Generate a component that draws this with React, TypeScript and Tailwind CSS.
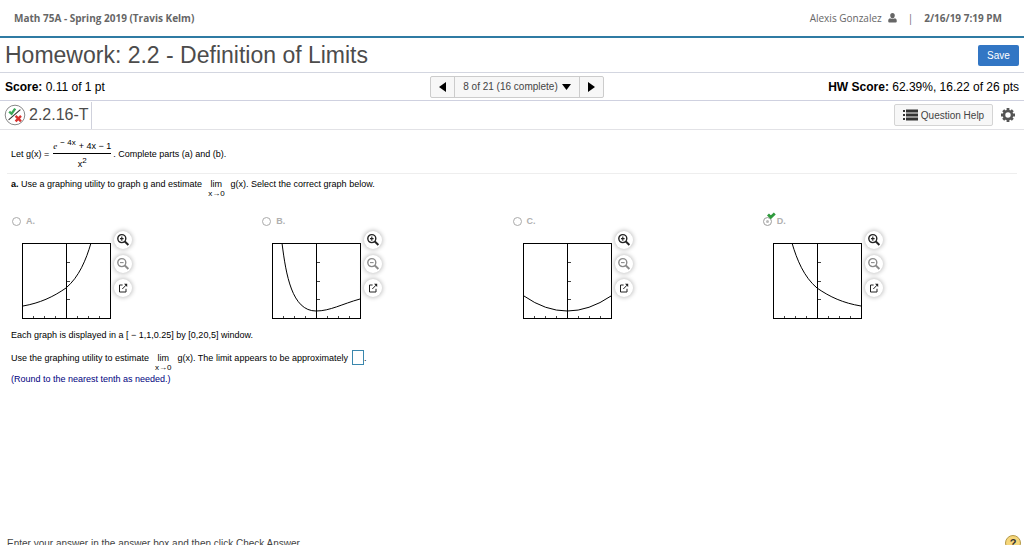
import React, { useState } from "react";

interface Choice {
  id: string;
  curve: string;
}

const choices: Choice[] = [
  { id: "A", curve: "M1 63 C18 60 31 54 44 45 C57 34 64 17 69 0" },
  { id: "B", curve: "M10 0 C14 32 20 68 44 68 C58 68 70 61 88 56" },
  { id: "C", curve: "M1 53 Q44 83 88 53" },
  { id: "D", curve: "M19 0 C24 17 31 34 44 45 C57 54 70 60 88 63" },
];

const correctChoice = "D";

const Graph = ({ curve }: { curve: string }) => (
  <svg width="89" height="76" viewBox="0 0 89 76" fill="none" stroke="#000">
    <path d={curve} strokeWidth="1" />
    <g shapeRendering="crispEdges">
      <rect x="0.5" y="0.5" width="88" height="75" />
      <path d="M44.5 0V76" />
      <path d="M45 19.5h3M45 38.5h3M45 56.5h3" stroke="#444" />
      <path d="M11.5 73v2M22.5 73v2M33.5 73v2M55.5 73v2M66.5 73v2M77.5 73v2" stroke="#444" />
    </g>
  </svg>
);

const Magnifier = ({ plus }: { plus?: boolean }) => (
  <svg width="14" height="14" viewBox="0 0 14 14" fill="none" stroke="currentColor">
    <circle cx="5.8" cy="5.6" r="4" strokeWidth="1.4" />
    <path d="M8.8 8.6L12.4 12" strokeWidth="2" />
    <path d={plus ? "M4 5.6h3.6M5.8 3.4v4.4" : "M4 5.6h3.6"} strokeWidth="1.1" />
  </svg>
);

const PopOut = () => (
  <svg width="10" height="10" viewBox="0 0 10 10" fill="none" stroke="currentColor">
    <path d="M4.6 2H1.5V9H8V5.8" strokeWidth="1" />
    <path d="M4.3 6L8 2.2" strokeWidth="1" />
    <path d="M6 0.8H9.2V4Z" fill="currentColor" stroke="none" />
  </svg>
);

const GraphButton = ({ label, disabled, children }: { label: string; disabled?: boolean; children: React.ReactNode }) => (
  <button
    type="button"
    aria-label={label}
    disabled={disabled}
    className="flex size-[18px] items-center justify-center rounded-full bg-white text-[#222] shadow-[0_0_4px_1px_#c4c4c4] disabled:text-[#8a8a8a]"
  >
    {children}
  </button>
);

const Limit = () => (
  <span className="mx-1.5 flex flex-col items-center">
    <span>lim</span>
    <span className="text-[8px]">x→0</span>
  </span>
);

const PartialCreditIcon = () => (
  <svg width="22" height="22" viewBox="0 0 22 22" fill="none">
    <circle cx="11" cy="11" r="9.8" fill="#fff" stroke="#888" strokeWidth="1" />
    <path d="M5.2 7.6L7.6 9.8L11.2 4.6" stroke="#3aa757" strokeWidth="2.4" />
    <path d="M4.6 15.8L16.4 5.6" stroke="#333" strokeWidth="1.1" />
    <path d="M11.6 11.9L17 17.3M17 11.9L11.6 17.3" stroke="#d8322f" strokeWidth="2.4" />
  </svg>
);

const GearIcon = () => (
  <svg width="14" height="14" viewBox="0 0 14 14" fill="none" stroke="#555">
    <circle cx="7" cy="7" r="4" strokeWidth="2.6" />
    <path d="M7 0V3M7 11V14M0 7H3M11 7H14" strokeWidth="2.8" />
    <path d="M2.2 2.2L4 4M10 10L11.8 11.8M11.8 2.2L10 4M4 10L2.2 11.8" strokeWidth="2.8" />
  </svg>
);

const ListIcon = () => (
  <svg width="15" height="12" viewBox="0 0 15 12" fill="#333">
    <path d="M0 1h2v2H0zM0 5h2v2H0zM0 9h2v2H0zM3 0.6h12v2.8H3zM3 4.6h12v2.8H3zM3 8.6h12v2.8H3z" />
  </svg>
);

export default function App() {
  const [selected, setSelected] = useState(correctChoice);
  const [answer, setAnswer] = useState("");

  return (
    <div className="flex h-screen flex-col overflow-hidden bg-white font-['Liberation_Sans',Arial,sans-serif] text-black">
      <header className="flex h-[38px] shrink-0 items-center justify-between border-b-2 border-[#2f7ba3] pr-[22px] pl-[14px] font-['Open_Sans',sans-serif] text-[10px] text-[#666]">
        <span className="font-bold">Math 75A - Spring 2019 (Travis Kelm)</span>
        <div className="flex items-center">
          <span>Alexis Gonzalez</span>
          <svg className="ml-1.5" width="9" height="10" viewBox="0 0 9 10" fill="#666">
            <path d="M4.5 0C6 0 6.8 1 6.8 2.5S5.9 5.4 4.5 5.4S2.2 4 2.2 2.5S3 0 4.5 0ZM2 5.2C3.5 6.3 5.5 6.3 7 5.2C8.4 5.5 8.8 6.8 8.8 8.2Q8.8 9.4 7.6 9.4H1.4Q0.2 9.4 0.2 8.2C0.2 6.8 0.6 5.5 2 5.2Z" />
          </svg>
          <span className="mx-[11px]">|</span>
          <span className="font-bold">2/16/19 7:19 PM</span>
        </div>
      </header>

      <div className="flex h-[35px] shrink-0 items-center justify-between border-b border-[#d3d6e0] px-[5px]">
        <h1 className="text-[23px] leading-8 text-[#4c4c4c]">Homework: 2.2 - Definition of Limits</h1>
        <button type="button" className="h-[21px] w-[41px] rounded-xs bg-[#3276c4] text-[10px] text-white">
          Save
        </button>
      </div>

      <div className="grid h-7 shrink-0 grid-cols-[1fr_auto_1fr] items-center border-b border-[#cfd1e0] px-[5px] text-[12px]">
        <p>
          <b>Score:</b> 0.11 of 1 pt
        </p>
        <nav className="ml-2.5 flex h-[22px] rounded-xs border border-[#ccc] bg-[#f7f7f7] text-[10px] text-[#444]">
          <button type="button" aria-label="Previous question" className="flex w-6 items-center justify-center border-r border-[#ccc]">
            <svg width="7" height="10" viewBox="0 0 7 10">
              <path d="M7 0V10L0 5Z" />
            </svg>
          </button>
          <button type="button" className="flex w-[124px] items-center justify-center gap-1">
            <span className="whitespace-nowrap">8 of 21 (16 complete)</span>
            <svg width="9" height="6" viewBox="0 0 9 6">
              <path d="M0 0H9L4.5 6Z" />
            </svg>
          </button>
          <button type="button" aria-label="Next question" className="flex w-6 items-center justify-center border-l border-[#ccc]">
            <svg width="7" height="10" viewBox="0 0 7 10">
              <path d="M0 0V10L7 5Z" />
            </svg>
          </button>
        </nav>
        <p className="text-right">
          <b>HW Score:</b> 62.39%, 16.22 of 26 pts
        </p>
      </div>

      <div className="flex h-[29px] shrink-0 items-center justify-between border-b border-[#e2e2e6] pr-[9px] pl-1">
        <div className="flex h-[27px] items-center gap-[3px] border-r border-[#cfd1dc] pr-[2px]">
          <PartialCreditIcon />
          <h2 className="text-[16px] text-[#4c4c4c]">2.2.16-T</h2>
        </div>
        <div className="flex items-center gap-2">
          <button
            type="button"
            className="flex h-[22px] w-[99px] items-center justify-center gap-[3px] rounded-xs border border-[#d4d4d4] bg-[#f7f7f7] text-[10px] text-[#444]"
          >
            <ListIcon />
            Question Help
          </button>
          <button type="button" aria-label="Settings">
            <GearIcon />
          </button>
        </div>
      </div>

      <main className="min-h-0 flex-1 text-[9px] leading-[10px]">
        <section className="mx-[7px] flex h-11 items-center border-b border-[#eee] px-1 pt-1">
          <span>Let g(x) =</span>
          <span className="mr-[2px] ml-1 flex flex-col items-center">
            <span className="flex w-[58px] items-end justify-center border-b border-black pb-0.5 whitespace-nowrap">
              <i className="font-['Liberation_Serif',serif]">e</i>
              <span className="mb-1 ml-[3px] text-[8px] leading-2">− 4x</span>
              <span className="ml-[3px]">+ 4x − 1</span>
            </span>
            <span className="flex items-start pt-[3px]">
              <span className="pt-0.5">x</span>
              <span className="text-[8px] leading-2">2</span>
            </span>
          </span>
          <span>. Complete parts (a) and (b).</span>
        </section>

        <section className="px-[11px] pt-[5px]">
          <div className="flex">
            <p>
              <b>a.</b> Use a graphing utility to graph g and estimate
            </p>
            <Limit />
            <p>g(x). Select the correct graph below.</p>
          </div>

          <div className="mt-[17px] ml-px grid grid-cols-4">
            {choices.map(({ id, curve }) => (
              <div key={id}>
                <div className="relative flex items-center">
                  <input
                    type="radio"
                    id={`choice-${id}`}
                    name="graph"
                    checked={selected === id}
                    onChange={() => setSelected(id)}
                    className="size-[9px] appearance-none rounded-full border border-[#aaa] bg-white checked:bg-[#bbb] checked:shadow-[inset_0_0_0_2px_#fff]"
                  />
                  <label htmlFor={`choice-${id}`} className="ml-[5px] font-bold text-[#b0b0b0]">
                    {id}.
                  </label>
                  {id === correctChoice && (
                    <svg className="absolute -top-1 left-1" width="9" height="8" viewBox="0 0 9 8" fill="none">
                      <path d="M1 2.4L3.8 5.2L7.8 1.4" stroke="#2f9a3c" strokeWidth="2.8" />
                    </svg>
                  )}
                </div>
                <div className="mt-[5px] flex gap-[3px] pl-2.5">
                  <div className="pt-3">
                    <Graph curve={curve} />
                  </div>
                  <div className="flex flex-col gap-1.5">
                    <GraphButton label="Zoom in">
                      <Magnifier plus />
                    </GraphButton>
                    <GraphButton label="Zoom out" disabled>
                      <Magnifier />
                    </GraphButton>
                    <GraphButton label="Open graph in new window">
                      <PopOut />
                    </GraphButton>
                  </div>
                </div>
              </div>
            ))}
          </div>

          <p className="mt-[11px]">Each graph is displayed in a [ − 1,1,0.25] by [0,20,5] window.</p>

          <div className="mt-[13px] flex">
            <label htmlFor="limit">Use the graphing utility to estimate</label>
            <Limit />
            <p>g(x). The limit appears to be approximately</p>
            <input
              id="limit"
              type="text"
              value={answer}
              onChange={(e) => setAnswer(e.target.value)}
              className="-mt-[3px] ml-1 h-[15px] w-3 border border-[#3a87ad] bg-white outline-none"
            />
            <span>.</span>
          </div>
          <p className="mt-px text-[#000080]">(Round to the nearest tenth as needed.)</p>
        </section>
      </main>

      <footer className="-mb-1.5 flex h-4 shrink-0 items-center justify-between pr-[3px] pl-[7px] text-[10px] text-[#444]">
        <p>Enter your answer in the answer box and then click Check Answer.</p>
        <button
          type="button"
          className="size-4 rounded-full border border-[#b59a4a] bg-[#f6d67a] text-[11px] leading-3 font-bold text-[#333]"
        >
          ?
        </button>
      </footer>
    </div>
  );
}
